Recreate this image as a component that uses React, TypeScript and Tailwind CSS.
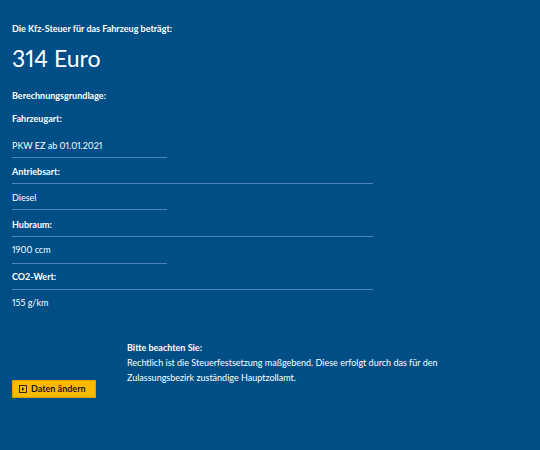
import React from "react";

const font = { fontFamily: "Lato, 'Open Sans', sans-serif" };

function Line({ long, mt }: { long?: boolean; mt: string }) {
  return <div className={`h-px bg-[#4c86b8] ${mt} ${long ? "w-[361px]" : "w-[155px]"}`} />;
}

export default function App() {
  return (
    <div className="w-[540px] h-[450px] bg-[#004e86] text-white px-3 proportional-nums" style={font}>
      <div className="pt-[23px] text-[9px] font-bold leading-[11px]">Die Kfz-Steuer für das Fahrzeug beträgt:</div>
      <div className="mt-[10px] text-[23px] leading-[28px]">314 Euro</div>
      <div className="mt-[18px] text-[9px] font-bold leading-[11px]">Berechnungsgrundlage:</div>
      <div className="mt-[12px] text-[9px] font-bold leading-[11px]">Fahrzeugart:</div>
      <div className="mt-[16px] text-[9px] leading-[11px]">PKW EZ ab 01.01.2021</div>
      <Line mt="mt-[6px]" />
      <div className="mt-[8px] text-[9px] font-bold leading-[11px]">Antriebsart:</div>
      <Line long mt="mt-[6px]" />
      <div className="mt-[8px] text-[9px] leading-[11px]">Diesel</div>
      <Line mt="mt-[6px]" />
      <div className="mt-[9px] text-[9px] font-bold leading-[11px]">Hubraum:</div>
      <Line long mt="mt-[6px]" />
      <div className="mt-[7px] text-[9px] leading-[11px]">1900 ccm</div>
      <Line mt="mt-[8px]" />
      <div className="mt-[7px] text-[9px] font-bold leading-[11px]">CO2-Wert:</div>
      <Line long mt="mt-[7px]" />
      <div className="mt-[7px] text-[9px] leading-[11px]">155 g/km</div>
      <div className="mt-[32px] flex items-start">
        <div className="w-[115px] pt-[40px]">
          <button className="h-[18px] w-[84px] bg-[#fbb900] border border-[#d9a000] flex items-center gap-[4px] pl-[6px] text-[#1a1a1a] text-[9px] font-bold">
            <svg width="8" height="8" viewBox="0 0 8 8" className="shrink-0">
              <rect x="0.5" y="0.5" width="7" height="7" fill="none" stroke="#1a1a1a" strokeWidth="0.9" />
              <path d="M3 2 L5.2 4 L3 6 Z" fill="#1a1a1a" />
            </svg>
            Daten ändern
          </button>
        </div>
        <div className="text-[9px] leading-[15px]">
          <div className="font-bold">Bitte beachten Sie:</div>
          <div>Rechtlich ist die Steuerfestsetzung maßgebend. Diese erfolgt durch das für den</div>
          <div>Zulassungsbezirk zuständige Hauptzollamt.</div>
        </div>
      </div>
    </div>
  );
}
